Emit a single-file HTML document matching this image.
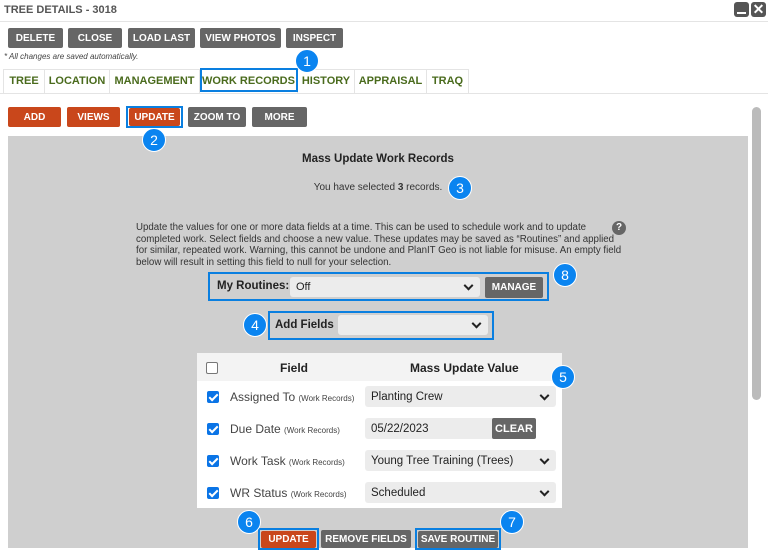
<!DOCTYPE html><html><head><style>
*{box-sizing:border-box;margin:0;padding:0}
body{width:768px;height:553px;background:#fff;font-family:"Liberation Sans",sans-serif;position:relative;overflow:hidden;color:#333}
.a{position:absolute}
.btn{position:absolute;color:#fff;font-weight:bold;font-size:10px;display:flex;align-items:center;justify-content:center;border-radius:2px;white-space:nowrap}
.g{background:#666}.o{background:#c9471b}
.bd{position:absolute;border:2px solid #0a7fe0}
.bg{position:absolute;width:24px;height:24px;border-radius:50%;background:#0a84f0;color:#fff;font-size:14px;display:flex;align-items:center;justify-content:center;border:1px solid #fff}
.tab{position:absolute;top:69px;height:24px;font-size:11px;font-weight:bold;color:#4a6b1d;display:flex;align-items:center;justify-content:center;border-right:1px solid #e4e4e4;white-space:nowrap}
.sel{position:absolute;background:#ececec;border-radius:3px;font-size:11px;display:flex;align-items:center;padding-left:6px;color:#222}
.sel:after{content:"";position:absolute;right:8px;top:50%;width:5px;height:5px;border-right:2px solid #222;border-bottom:2px solid #222;transform:translateY(-70%) rotate(45deg)}
.cb{position:absolute;left:10px;width:12px;height:12px;background:#0a74e6;border-radius:2px}
.cb:after{content:"";position:absolute;left:4px;top:1px;width:3px;height:7px;border-right:2px solid #fff;border-bottom:2px solid #fff;transform:rotate(45deg)}
.row{position:absolute;left:0;width:365px;height:32px;background:#fff}
.lab{position:absolute;left:33px;top:9px;font-size:12px;color:#444;white-space:nowrap}
.lab small{font-size:8px}
</style></head><body>
<div class="a" style="left:4px;top:4px;font-size:11px;font-weight:bold;color:#555">TREE DETAILS - 3018</div>
<div class="a" style="left:734px;top:2px;width:15px;height:15px;background:#555;border-radius:3px"><div class="a" style="left:3px;top:10px;width:9px;height:2px;background:#fff"></div></div>
<div class="a" style="left:751px;top:2px;width:15px;height:15px;background:#555;border-radius:3px;color:#fff;font-weight:bold;font-size:14px;line-height:15px;text-align:center">✕</div>
<div class="a" style="left:0;top:21px;width:768px;height:1px;background:#e4e4e4"></div>
<div class="btn g" style="left:8px;top:28px;width:55px;height:20px">DELETE</div>
<div class="btn g" style="left:68px;top:28px;width:54px;height:20px">CLOSE</div>
<div class="btn g" style="left:128px;top:28px;width:67px;height:20px">LOAD LAST</div>
<div class="btn g" style="left:200px;top:28px;width:81px;height:20px">VIEW PHOTOS</div>
<div class="btn g" style="left:286px;top:28px;width:57px;height:20px">INSPECT</div>
<div class="a" style="left:4px;top:52px;font-size:8px;font-style:italic;color:#444">* All changes are saved automatically.</div>
<div class="a" style="left:3px;top:69px;width:466px;height:24px;border:1px solid #e4e4e4;border-bottom:none"></div>
<div class="tab" style="left:4px;width:41px">TREE</div>
<div class="tab" style="left:45px;width:65px">LOCATION</div>
<div class="tab" style="left:110px;width:90px">MANAGEMENT</div>
<div class="tab" style="left:200px;width:98px">WORK RECORDS</div>
<div class="tab" style="left:298px;width:57px">HISTORY</div>
<div class="tab" style="left:355px;width:72px">APPRAISAL</div>
<div class="tab" style="left:427px;width:42px">TRAQ</div>
<div class="bd" style="left:200px;top:68px;width:98px;height:24px"></div>
<div class="a" style="left:0;top:93px;width:768px;height:1px;background:#e4e4e4"></div>
<div class="bg" style="left:295px;top:49px">1</div>
<div class="btn o" style="left:8px;top:107px;width:53px;height:20px">ADD</div>
<div class="btn o" style="left:67px;top:107px;width:53px;height:20px">VIEWS</div>
<div class="btn o" style="left:129px;top:108px;width:51px;height:18px">UPDATE</div>
<div class="bd" style="left:126px;top:106px;width:57px;height:22px"></div>
<div class="btn g" style="left:188px;top:107px;width:58px;height:20px">ZOOM TO</div>
<div class="btn g" style="left:252px;top:107px;width:55px;height:20px">MORE</div>
<div class="a" style="left:752px;top:107px;width:9px;height:293px;background:#bbb;border-radius:5px"></div>
<div class="a" style="left:8px;top:136px;width:740px;height:412px;background:#cfcfcf"></div>
<div class="bg" style="left:142px;top:128px">2</div>
<div class="a" style="left:8px;top:153px;width:740px;text-align:center;font-size:11.5px;font-weight:bold;color:#222">Mass Update Work Records</div>
<div class="a" style="left:8px;top:182px;width:740px;text-align:center;font-size:10px;color:#333">You have selected <b>3</b> records.</div>
<div class="bg" style="left:448px;top:176px">3</div>
<div class="a" style="left:136px;top:222px;width:490px;font-size:9.7px;line-height:11.5px;color:#333">Update the values for one or more data fields at a time. This can be used to schedule work and to update completed work. Select fields and choose a new value. These updates may be saved as “Routines” and applied for similar, repeated work. Warning, this cannot be undone and PlanIT Geo is not liable for misuse. An empty field below will result in setting this field to null for your selection.</div>
<div class="a" style="left:612px;top:221px;width:14px;height:14px;border-radius:50%;background:#666;color:#fff;font-size:10px;font-weight:bold;text-align:center;line-height:14px">?</div>
<div class="a" style="left:217px;top:280px;font-size:11.5px;font-weight:bold;color:#222">My Routines:</div>
<div class="sel" style="left:290px;top:277px;width:190px;height:20px">Off</div>
<div class="btn g" style="left:485px;top:277px;width:58px;height:21px">MANAGE</div>
<div class="bd" style="left:208px;top:272px;width:341px;height:29px"></div>
<div class="bg" style="left:553px;top:263px">8</div>
<div class="a" style="left:275px;top:319px;font-size:11.5px;font-weight:bold;color:#222">Add Fields</div>
<div class="sel" style="left:338px;top:315px;width:150px;height:20px"></div>
<div class="bd" style="left:268px;top:311px;width:226px;height:29px"></div>
<div class="bg" style="left:243px;top:313px">4</div>
<div class="a" style="left:197px;top:353px;width:365px;height:155px;background:#f3f3f3">
<div class="a" style="left:9px;top:9px;width:12px;height:12px;border:1px solid #777;background:#fff;border-radius:2px"></div>
<div class="a" style="left:83px;top:8px;font-size:12px;font-weight:bold;color:#222">Field</div>
<div class="a" style="left:213px;top:8px;font-size:12px;font-weight:bold;color:#222">Mass Update Value</div>
<div class="row" style="top:28px"><div class="cb" style="top:10px"></div><div class="lab">Assigned To <small>(Work Records)</small></div><div class="sel" style="left:168px;top:5px;width:191px;height:21px;font-size:11.5px">Planting Crew</div></div>
<div class="row" style="top:60px"><div class="cb" style="top:10px"></div><div class="lab">Due Date <small>(Work Records)</small></div><div class="sel" style="left:168px;top:5px;width:171px;height:21px;font-size:11.5px">05/22/2023</div><div class="btn g" style="left:295px;top:5px;width:44px;height:21px;font-size:11px">CLEAR</div></div>
<div class="row" style="top:92px"><div class="cb" style="top:10px"></div><div class="lab">Work Task <small>(Work Records)</small></div><div class="sel" style="left:168px;top:5px;width:191px;height:21px;font-size:11.5px">Young Tree Training (Trees)</div></div>
<div class="row" style="top:124px;height:31px"><div class="cb" style="top:10px"></div><div class="lab">WR Status <small>(Work Records)</small></div><div class="sel" style="left:168px;top:5px;width:191px;height:21px;font-size:11.5px">Scheduled</div></div>
</div>
<div class="bg" style="left:551px;top:365px">5</div>
<div class="btn o" style="left:261px;top:531px;width:55px;height:17px">UPDATE</div>
<div class="bd" style="left:258px;top:528px;width:61px;height:22px"></div>
<div class="btn g" style="left:321px;top:530px;width:90px;height:18px">REMOVE FIELDS</div>
<div class="btn g" style="left:418px;top:531px;width:80px;height:17px">SAVE ROUTINE</div>
<div class="bd" style="left:415px;top:528px;width:86px;height:22px"></div>
<div class="bg" style="left:237px;top:510px">6</div>
<div class="bg" style="left:500px;top:510px">7</div>
</body></html>
